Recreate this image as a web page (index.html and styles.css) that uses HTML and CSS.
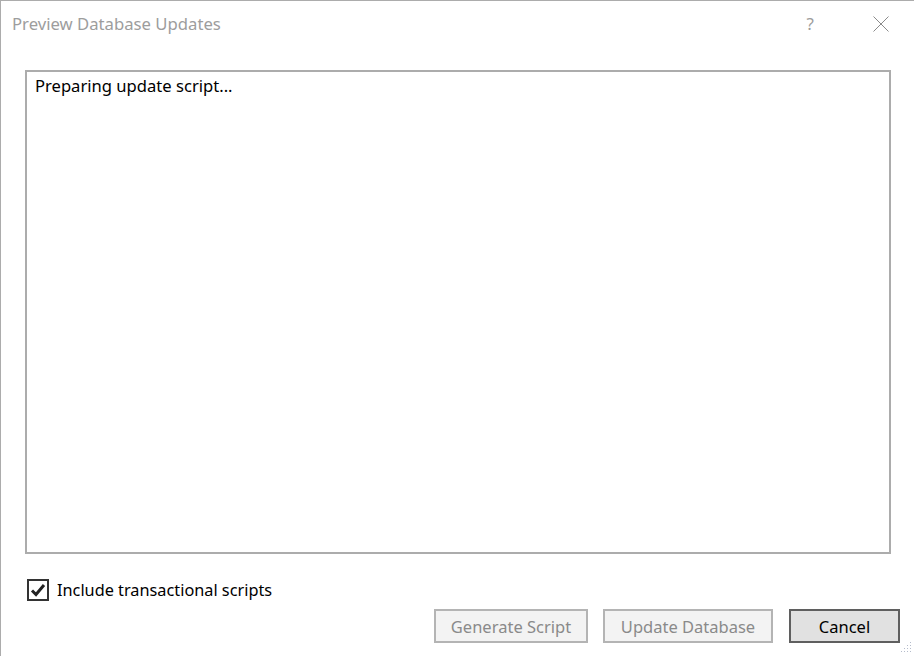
FILE: index.html
```html
<!DOCTYPE html>
<html lang="en">
<head>
    <meta charset="UTF-8">
    <title>Preview Database Updates</title>
    <link rel="stylesheet" href="styles.css">
</head>
<body>
    <div class="window">
        <div class="titlebar">
            <span class="title">Preview Database Updates</span>
            <span class="help">?</span>
            <svg class="close" width="16" height="16" viewBox="0 0 16 16">
                <path d="M0.5 0.5 L15.5 15.5 M15.5 0.5 L0.5 15.5" stroke="#8a8a8a" stroke-width="1" fill="none"/>
            </svg>
        </div>

        <div class="content">
            <div class="script-box">Preparing update script...</div>

            <label class="check-row">
                <span class="checkbox">
                    <svg width="16" height="16" viewBox="0 0 16 16">
                        <path d="M2 8.5 L6 12.5 L14 3" stroke="#222" stroke-width="3" fill="none"/>
                    </svg>
                </span>
                Include transactional scripts
            </label>

            <div class="buttons">
                <button class="btn" disabled>Generate Script</button>
                <button class="btn btn-wide" disabled>Update Database</button>
                <button class="btn btn-cancel">Cancel</button>
            </div>
        </div>

        <svg class="grip" width="14" height="14" viewBox="0 0 14 14">
            <g fill="#b5bccb">
                <rect x="11" y="1" width="1" height="1"/>
                <rect x="8" y="4" width="1" height="1"/>
                <rect x="11" y="4" width="1" height="1"/>
                <rect x="5" y="7" width="1" height="1"/>
                <rect x="8" y="7" width="1" height="1"/>
                <rect x="11" y="7" width="1" height="1"/>
                <rect x="2" y="10" width="1" height="1"/>
                <rect x="5" y="10" width="1" height="1"/>
                <rect x="8" y="10" width="1" height="1"/>
                <rect x="11" y="10" width="1" height="1"/>
            </g>
        </svg>
    </div>
</body>
</html>
```

FILE: styles.css
```css
body {
    margin: 0;
    background-color: white;
    font-family: "Noto Sans", "Open Sans", sans-serif;
    color: #000;
}
.window {
    position: relative;
    height: 655px;
    border-top: 1px solid #acacac;
    border-left: 1px solid #acacac;
    overflow: hidden;
}
.titlebar {
    display: flex;
    align-items: center;
    height: 47px;
    padding: 0 25px 0 11px;
}
.title {
    flex: 1;
    font-size: 16.7px;
    color: #9d9d9d;
    margin-top: -2px;
}
.help {
    font-size: 17px;
    color: #9d9d9d;
    margin-right: 59px;
    margin-top: -2px;
}
.close {
    margin-top: -2px;
}
.content {
    padding: 22px 23px 0 24px;
}
.script-box {
    height: 474px;
    border: 2px solid #acacac;
    padding: 2px 8px 4px;
    font-size: 16.6px;
}
.check-row {
    display: flex;
    align-items: center;
    gap: 8px;
    margin-top: 25px;
    margin-left: 2px;
    font-size: 16.3px;
}
.checkbox {
    display: flex;
    align-items: center;
    justify-content: center;
    width: 18px;
    height: 18px;
    border: 2px solid #333;
}
.buttons {
    display: flex;
    justify-content: flex-end;
    gap: 15px;
    margin-top: 8px;
    margin-right: -9px;
}
.btn {
    height: 34px;
    padding: 0;
    width: 154px;
    font-family: inherit;
    font-size: 16.5px;
    background-color: #f3f3f3;
    border: 2px solid #b4b4b4;
    color: #8a8a8a;
}
.btn-wide {
    width: 170px;
}
.btn-cancel {
    width: 111px;
    margin-left: 1px;
    background-color: #e1e1e1;
    border-color: #5f5f5f;
    color: #000;
}
.grip {
    position: absolute;
    right: 1px;
    bottom: 1px;
}
```
